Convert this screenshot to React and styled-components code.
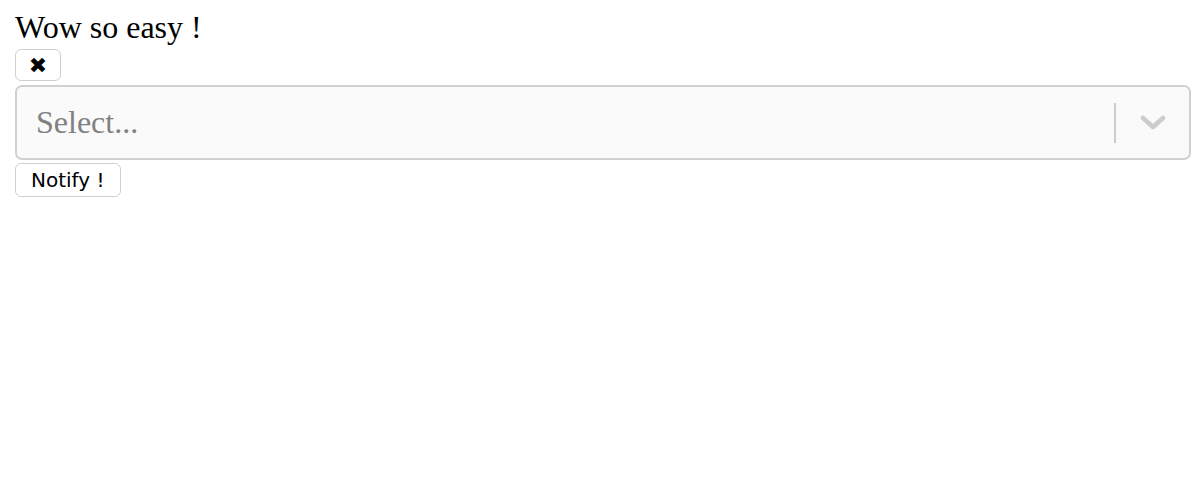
import styled, { createGlobalStyle } from 'styled-components'

const GlobalStyle = createGlobalStyle`
 body {
  margin: 0;
  background: #fff;
  font-family: "Liberation Serif", "Times New Roman", serif;
 }
`

const Page = styled.div`
 padding: 10px 9px 0 15px;
 display: flex;
 flex-direction: column;
 align-items: flex-start;
 gap: 4px;
`

const Title = styled.div`
 font-size: 32px;
 line-height: 35px;
 color: #000;
`

const Button = styled.button`
 box-sizing: border-box;
 height: ${({ $h }) => $h || 33}px;
 padding: 0 ${({ $px }) => $px || 14}px;
 background: #fff;
 border: 1.5px solid #cfcfcf;
 border-radius: 6px;
 font-family: "DejaVu Sans", "Liberation Sans", Arial, sans-serif;
 font-size: ${({ $fs }) => $fs || 20}px;
 color: #000;
 display: flex;
 align-items: center;
 justify-content: center;
 cursor: pointer;
`

const SelectBox = styled.div`
 box-sizing: border-box;
 width: 100%;
 height: 75px;
 display: flex;
 align-items: center;
 background: #fafafa;
 border: 2px solid #d0d0d0;
 border-radius: 7px;
`

const Placeholder = styled.div`
 flex: 1;
 padding-left: 19px;
 font-size: 32px;
 color: #808080;
`

const Separator = styled.span`
 width: 2px;
 height: 40px;
 background: #cccccc;
`

const Indicator = styled.div`
 width: 73px;
 display: flex;
 justify-content: center;
 align-items: center;
`

function Chevron() {
 return (
  <svg width="26" height="16" viewBox="0 0 26 16">
   <path d="M3 3 L13 12 L23 3" fill="none" stroke="#cccccc" strokeWidth="4.5" strokeLinecap="round" strokeLinejoin="round" />
  </svg>
 )
}

export default function App() {
 return (
  <>
   <GlobalStyle />
   <Page>
    <Title>Wow so easy !</Title>
    <Button $h={32} $px={0} $fs={22} style={{ width: 46 }}>✖</Button>
    <SelectBox>
     <Placeholder>Select...</Placeholder>
     <Separator />
     <Indicator>
      <Chevron />
     </Indicator>
    </SelectBox>
    <Button $h={34} $px={15} style={{ marginTop: -1 }}>Notify !</Button>
   </Page>
  </>
 )
}
